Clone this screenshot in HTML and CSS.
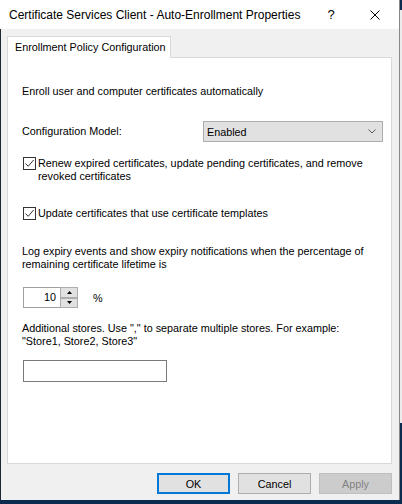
FILE: index.html
```html
<!DOCTYPE html>
<html>
<head>
<meta charset="utf-8">
<link rel="stylesheet" href="styles.css">
</head>
<body>
<div class="window">
  <div class="titlebar">
    <span class="title">Certificate Services Client - Auto-Enrollment Properties</span>
    <span class="help">?</span>
    <span class="close"><svg width="10" height="10" viewBox="0 0 10 10"><path d="M0.5 0.5 L9.5 9.5 M9.5 0.5 L0.5 9.5" stroke="#000" stroke-width="1" fill="none"/></svg></span>
  </div>
  <div class="frame">
    <div class="tabs"><div class="tab">Enrollment Policy Configuration</div></div>
    <div class="panel">
      <p class="intro">Enroll user and computer certificates automatically</p>
      <div class="model">
        <span class="label">Configuration Model:</span>
        <div class="select"><span>Enabled</span><svg width="8" height="5" viewBox="0 0 8 5"><path d="M0.5 0.5 L4 4 L7.5 0.5" stroke="#5a5a5a" stroke-width="1" fill="none"/></svg></div>
      </div>
      <div class="check c1">
        <span class="box"><svg width="11" height="11" viewBox="0 0 11 11"><path d="M1.5 5.5 L4.2 8.3 L9.6 2" stroke="#333" stroke-width="1" fill="none"/></svg></span>
        <span class="ctext">Renew expired certificates, update pending certificates, and remove revoked certificates</span>
      </div>
      <div class="check c2">
        <span class="box"><svg width="11" height="11" viewBox="0 0 11 11"><path d="M1.5 5.5 L4.2 8.3 L9.6 2" stroke="#333" stroke-width="1" fill="none"/></svg></span>
        <span class="ctext">Update certificates that use certificate templates</span>
      </div>
      <p class="log">Log expiry events and show expiry notifications when the percentage of remaining certificate lifetime is</p>
      <div class="spinrow">
        <div class="spin">
          <span class="value">10</span>
          <div class="arrows">
            <span class="arrow"><svg width="5" height="3" viewBox="0 0 5 3"><path d="M0 3 L2.5 0 L5 3 Z" fill="#000"/></svg></span>
            <span class="arrow"><svg width="5" height="3" viewBox="0 0 5 3"><path d="M0 0 L2.5 3 L5 0 Z" fill="#000"/></svg></span>
          </div>
        </div>
        <span class="pct">%</span>
      </div>
      <p class="stores">Additional stores. Use "," to separate multiple stores. For example: "Store1, Store2, Store3"</p>
      <div class="textbox"></div>
    </div>
    <div class="buttons">
      <span class="btn default">OK</span>
      <span class="btn">Cancel</span>
      <span class="btn disabled">Apply</span>
    </div>
  </div>
</div>
</body>
</html>
```
FILE: styles.css
```css
html, body {
  margin: 0;
  padding: 0;
}
body {
  width: 402px;
  height: 504px;
  overflow: hidden;
  background: linear-gradient(to bottom, #0b2c4f 0, #0b2c4f 10px, #ececec 10px, #ececec 423px, #0b2c4f 423px);
  font-family: "Liberation Sans", Arial, sans-serif;
  font-size: 10.8px;
  color: #000;
}
.window {
  width: 400px;
  height: 500px;
  box-sizing: border-box;
  border-right: 1px solid #888;
  display: flex;
  flex-direction: column;
}
.titlebar {
  height: 29px;
  background: #fff;
  display: flex;
  align-items: center;
  flex-shrink: 0;
}
.title {
  font-size: 12px;
  padding-left: 9px;
  width: 311px;
  white-space: nowrap;
}
.help {
  font-size: 13px;
  width: 12px;
  text-align: center;
  margin-left: 5px;
}
.close {
  display: flex;
  margin-left: 33px;
}
.frame {
  flex: 1;
  background: #f0f0f0;
  border-left: 1px solid #1d2733;
  padding: 7px 7px 0 6px;
  display: flex;
  flex-direction: column;
}
.tabs {
  display: flex;
}
.tab {
  position: relative;
  z-index: 1;
  width: 164px;
  height: 22px;
  box-sizing: border-box;
  border: 1px solid #d9d9d9;
  border-bottom: none;
  background: #fff;
  margin-bottom: -1px;
  line-height: 20px;
  padding-left: 7px;
}
.panel {
  height: 407px;
  box-sizing: border-box;
  border: 1px solid #d9d9d9;
  background: #fff;
  padding-left: 14px;
  display: flex;
  flex-direction: column;
  align-items: flex-start;
}
p {
  margin: 0;
  line-height: 13px;
}
.intro {
  margin-top: 27px;
}
.model {
  margin-top: 23px;
  display: flex;
  align-items: center;
  height: 21px;
}
.label {
  width: 181px;
  line-height: 13px;
}
.select {
  width: 180px;
  height: 21px;
  box-sizing: border-box;
  border: 1px solid #adadad;
  background: #e1e1e1;
  display: flex;
  align-items: center;
  justify-content: space-between;
  padding: 0 6px 0 3px;
}
.check {
  display: flex;
  align-items: flex-start;
  margin-left: 1px;
  line-height: 13px;
}
.c1 { margin-top: 15px; }
.c2 { margin-top: 24px; }
.box {
  width: 13px;
  height: 13px;
  box-sizing: border-box;
  border: 1px solid #333;
  background: #fff;
  display: flex;
  flex-shrink: 0;
  margin-right: 2px;
}
.ctext {
  width: 340px;
}
.log {
  margin-top: 25px;
  width: 355px;
}
.spinrow {
  margin-top: 16px;
  margin-left: 1px;
  display: flex;
  align-items: center;
}
.spin {
  display: flex;
  height: 21px;
  box-sizing: border-box;
  border: 1px solid #a0a0a0;
  background: #fff;
}
.value {
  width: 36px;
  box-sizing: border-box;
  text-align: right;
  padding-right: 4px;
  line-height: 19px;
}
.arrows {
  display: flex;
  flex-direction: column;
  width: 17px;
}
.arrow {
  flex: 1;
  background: #e1e1e1;
  border: 1px solid #adadad;
  display: flex;
  align-items: center;
  justify-content: center;
  margin: -1px -1px 0 0;
}
.arrow + .arrow {
  margin-top: 0;
  margin-bottom: -1px;
}
.pct {
  margin-left: 15px;
}
.stores {
  margin-top: 14px;
  width: 340px;
}
.textbox {
  margin-top: 12px;
  margin-left: 1px;
  width: 144px;
  height: 22px;
  box-sizing: border-box;
  border: 1px solid #7a7a7a;
  background: #fff;
}
.buttons {
  display: flex;
  justify-content: flex-end;
  gap: 8px;
  margin-top: 9px;
}
.btn {
  width: 73px;
  height: 21px;
  box-sizing: border-box;
  border: 1px solid #adadad;
  background: #e1e1e1;
  display: flex;
  align-items: center;
  justify-content: center;
}
.btn.default {
  border: 2px solid #0078d7;
}
.btn.disabled {
  background: #cccccc;
  border-color: #bfbfbf;
  color: #838383;
}
```
